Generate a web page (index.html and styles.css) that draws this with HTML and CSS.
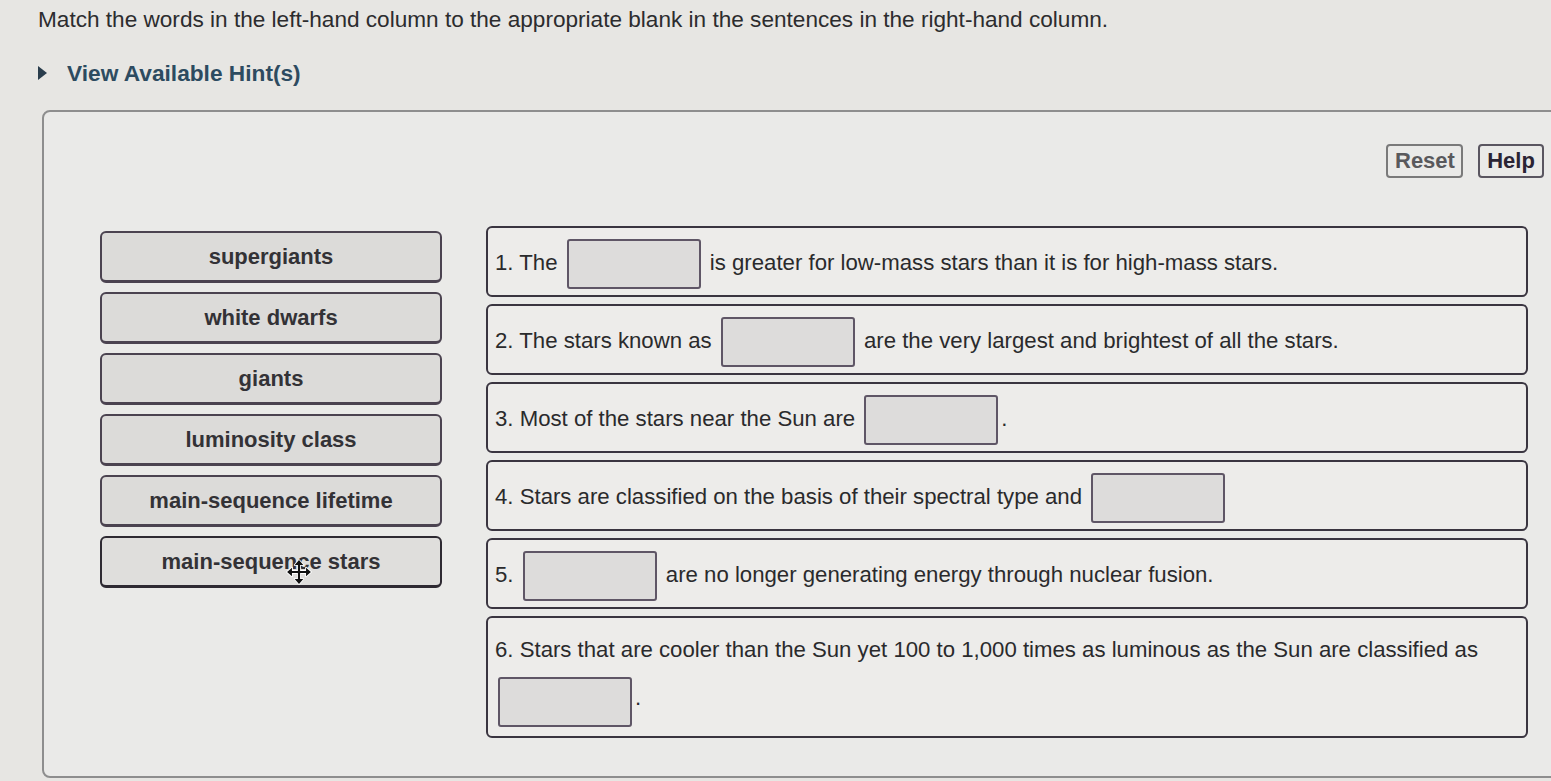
FILE: index.html
```html
<!DOCTYPE html>
<html lang="en">
<head>
<meta charset="utf-8">
<title>Matching</title>
<link rel="stylesheet" href="styles.css">
</head>
<body>
<div class="page">
  <p class="prompt">Match the words in the left-hand column to the appropriate blank in the sentences in the right-hand column.</p>
  <div class="hint"><span class="tri"></span><span class="hint-text">View Available Hint(s)</span></div>
  <div class="panel">
    <div class="toolbar">
      <button class="btn btn-reset">Reset</button>
      <button class="btn btn-help">Help</button>
    </div>
    <div class="work">
      <div class="words">
        <div class="tile">supergiants</div>
        <div class="tile">white dwarfs</div>
        <div class="tile">giants</div>
        <div class="tile">luminosity class</div>
        <div class="tile">main-sequence lifetime</div>
        <div class="tile tile-active">main-sequence stars
          <svg class="cursor" width="26" height="26" viewBox="0 0 24 24"><path d="M12 1 L16 5.5 L13 5.5 L13 11 L18.5 11 L18.5 8 L23 12 L18.5 16 L18.5 13 L13 13 L13 18.5 L16 18.5 L12 23 L8 18.5 L11 18.5 L11 13 L5.5 13 L5.5 16 L1 12 L5.5 8 L5.5 11 L11 11 L11 5.5 L8 5.5 Z" fill="#111" stroke="#fff" stroke-width="1.6" stroke-linejoin="round" paint-order="stroke"/></svg>
        </div>
      </div>
      <div class="sentences">
        <div class="sentence">1. The <span class="blank"></span> is greater for low-mass stars than it is for high-mass stars.</div>
        <div class="sentence">2. The stars known as <span class="blank"></span> are the very largest and brightest of all the stars.</div>
        <div class="sentence">3. Most of the stars near the Sun are <span class="blank"></span>.</div>
        <div class="sentence">4. Stars are classified on the basis of their spectral type and <span class="blank"></span></div>
        <div class="sentence">5. <span class="blank"></span> are no longer generating energy through nuclear fusion.</div>
        <div class="sentence sentence-tall">6. Stars that are cooler than the Sun yet 100 to 1,000 times as luminous as the Sun are classified as<br><span class="blank blank-low"></span>.</div>
      </div>
    </div>
  </div>
</div>
</body>
</html>
```

FILE: styles.css
```css
html, body {
  margin: 0;
  padding: 0;
  background: #e7e6e3;
  overflow: hidden;
}
body {
  font-family: "Liberation Sans", Arial, sans-serif;
  color: #2b2b2d;
  width: 1551px;
  height: 781px;
}
.page {
  padding-top: 7px;
}
.prompt {
  margin: 0 0 0 38px;
  font-size: 22.6px;
  line-height: 26px;
  color: #2c2c2e;
}
.hint {
  display: flex;
  align-items: center;
  margin: 27px 0 0 38px;
  height: 26px;
}
.tri {
  width: 0;
  height: 0;
  border-top: 7px solid transparent;
  border-bottom: 7px solid transparent;
  border-left: 9px solid #2a3d4c;
  margin-right: 20px;
}
.hint-text {
  font-weight: bold;
  font-size: 22.7px;
  color: #2d4b60;
}
.panel {
  margin: 24px 0 0 42px;
  width: 1519px;
  height: 668px;
  box-sizing: border-box;
  border: 2px solid #8e8e8e;
  border-radius: 8px;
  background: #eaeae8;
  padding: 32px 15px 0 56px;
}
.toolbar {
  display: flex;
  justify-content: flex-end;
  gap: 15px;
}
.btn {
  font-family: "Liberation Sans", Arial, sans-serif;
  font-weight: bold;
  font-size: 22px;
  height: 34px;
  padding: 0 7px;
  background: transparent;
  border: 2px solid #7a7a7a;
  border-radius: 4px;
  line-height: 28px;
}
.btn-reset {
  width: 77px;
  color: #59595c;
}
.btn-help {
  width: 66px;
  color: #2a2434;
  border-color: #5a5660;
}
.work {
  display: grid;
  grid-template-columns: 342px 1042px;
  column-gap: 44px;
  margin-top: 48px;
  align-items: start;
}
.words {
  display: flex;
  flex-direction: column;
  gap: 9px;
  margin-top: 5px;
}
.tile {
  position: relative;
  height: 52px;
  box-sizing: border-box;
  border: 2px solid #4b4350;
  border-bottom-width: 3px;
  border-radius: 6px;
  background: #dcdbd9;
  display: flex;
  align-items: center;
  justify-content: center;
  padding-top: 1px;
  font-weight: bold;
  font-size: 22px;
  color: #333236;
}
.tile-active {
  border-color: #2e2a32;
  background: #dfdedc;
}
.cursor {
  position: absolute;
  left: 184px;
  top: 21px;
}
.sentences {
  display: flex;
  flex-direction: column;
  gap: 7px;
}
.sentence {
  border: 2px solid #3a3540;
  border-radius: 6px;
  background: #edecea;
  padding: 10px 7px 5px 7px;
  font-size: 22.2px;
  line-height: 40px;
  color: #2a2a2c;
}
.sentence-tall {
  padding-top: 12px;
  padding-bottom: 8px;
}
.blank {
  display: inline-block;
  vertical-align: middle;
  width: 134px;
  height: 50px;
  box-sizing: border-box;
  border: 2px solid #5f5666;
  border-radius: 3px;
  background: #dddcdb;
  margin: 1px 3px;
}
.blank-low {
  margin-top: 7px;
}
```
